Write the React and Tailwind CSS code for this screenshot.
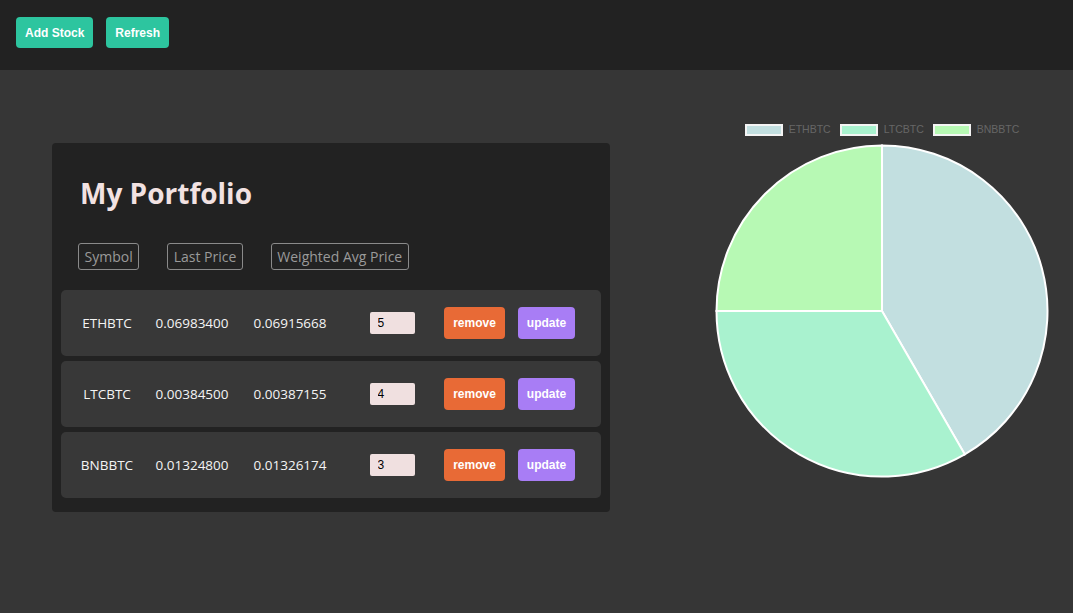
import React from "react";

const holdings = [
  { symbol: "ETHBTC", last: "0.06983400", avg: "0.06915668", qty: "5", color: "#c2dfe0" },
  { symbol: "LTCBTC", last: "0.00384500", avg: "0.00387155", qty: "4", color: "#a9f2cf" },
  { symbol: "BNBBTC", last: "0.01324800", avg: "0.01326174", qty: "3", color: "#b7f9b4" },
];

const headers = ["Symbol", "Last Price", "Weighted Avg Price"];

// pie slices as svg paths, angles in degrees clockwise from top
const R = 165.5;
const C = 170;
const point = (deg) => {
  const rad = (deg * Math.PI) / 180;
  return [C + R * Math.sin(rad), C - R * Math.cos(rad)];
};
const slicePath = (from, to) => {
  const [x1, y1] = point(from);
  const [x2, y2] = point(to);
  const large = to - from > 180 ? 1 : 0;
  return `M${C},${C} L${x1},${y1} A${R},${R} 0 ${large} 1 ${x2},${y2} Z`;
};

const PieChart = () => {
  const total = holdings.reduce((s, h) => s + Number(h.qty), 0);
  let start = 0;
  const slices = holdings.map((h) => {
    const sweep = (Number(h.qty) / total) * 360;
    const d = slicePath(start, start + sweep);
    start += sweep;
    return { ...h, d };
  });

  return (
    <div className="flex flex-col items-center w-[340px]">
      <div className="flex items-center h-[16px] gap-[9px] font-['Liberation_Sans',Arial,sans-serif] text-[10.5px] text-[#666]">
        {holdings.map((h) => (
          <div key={h.symbol} className="flex items-center gap-[6px]">
            <span
              className="block w-[38px] h-[12px] border-2 border-[#f4f4f4]"
              style={{ backgroundColor: h.color }}
            />
            <span>{h.symbol}</span>
          </div>
        ))}
      </div>
      <svg width="340" height="340" viewBox="0 0 340 340" className="mt-[3px]">
        {slices.map((s) => (
          <path key={s.symbol} d={s.d} fill={s.color} stroke="#ffffff" strokeWidth="2" />
        ))}
      </svg>
    </div>
  );
};

const Row = ({ item }) => (
  <div className="flex items-center h-[66px] rounded-[5px] bg-[#383838] text-[13.5px] text-[#f4f4f4] font-['Open_Sans',sans-serif]">
    <div className="w-[92px] text-center">{item.symbol}</div>
    <div className="w-[78px] text-center">{item.last}</div>
    <div className="w-[118px] text-center">{item.avg}</div>
    <div className="w-[86px] flex justify-center">
      <input
        defaultValue={item.qty}
        className="w-[45px] h-[22px] rounded-[2px] bg-[#f0e0e0] pl-[8px] text-[12px] text-black font-['Liberation_Sans',Arial,sans-serif] outline-none"
      />
    </div>
    <div className="flex items-center gap-[13px] ml-[9px] font-['Liberation_Sans',Arial,sans-serif] text-[12px] font-bold text-white">
      <button className="w-[61px] h-[32px] rounded-[4px] bg-[#e86a36]">remove</button>
      <button className="w-[57px] h-[32px] rounded-[4px] bg-[#a87df5]">update</button>
    </div>
  </div>
);

export default function App() {
  return (
    <div className="min-h-[613px] bg-[#363636]">
      <header className="h-[70px] bg-[#222222] flex items-start gap-[13px] pt-[17px] pl-[16px] font-['Liberation_Sans',Arial,sans-serif]">
        <button className="h-[31px] px-[9px] rounded-[4px] bg-[#2dc59f] text-white text-[12px] font-bold">
          Add Stock
        </button>
        <button className="h-[31px] px-[9px] rounded-[4px] bg-[#2dc59f] text-white text-[12px] font-bold">
          Refresh
        </button>
      </header>

      <main className="flex items-start pl-[52px]">
        <section className="mt-[73px] w-[558px] rounded-[4px] bg-[#222222] px-[9px] pb-[14px] font-['Open_Sans',sans-serif]">
          <h1 className="pl-[19px] pt-[31px] text-[28px] leading-[38px] font-bold text-[#f2e2e2]">
            My Portfolio
          </h1>
          <div className="flex gap-[28px] pl-[17px] mt-[31px] mb-[20px]">
            {headers.map((h) => (
              <span
                key={h}
                className="h-[27px] px-[5.5px] flex items-center rounded-[3px] border border-[#8a8a8a] text-[14px] text-[#9a9a9a]"
              >
                {h}
              </span>
            ))}
          </div>
          <div className="flex flex-col gap-[5px]">
            {holdings.map((item) => (
              <Row key={item.symbol} item={item} />
            ))}
          </div>
        </section>

        <div className="ml-[102px] mt-[52px]">
          <PieChart />
        </div>
      </main>
    </div>
  );
}
